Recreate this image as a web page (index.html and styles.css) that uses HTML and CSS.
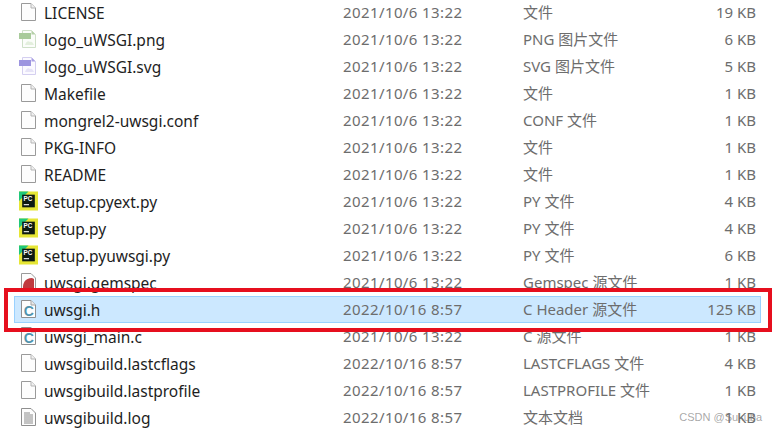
FILE: index.html
```html
<!DOCTYPE html>
<html lang="zh-CN">
<head>
  <meta charset="UTF-8" />
  <title>uwsgi</title>
  <link rel="stylesheet" href="styles.css">
</head>
<body>
  <svg class="defs" width="0" height="0">
    <symbol id="doc" viewBox="0 0 17 20">
      <path d="M1.5 1.5h9.5l4.5 4.5v12.5h-14z" fill="#fdfdfd" stroke="#9a9a9a"/>
      <path d="M11 1.5v4.5h4.5" fill="#f1f1f1" stroke="#b5b5b5"/>
    </symbol>
    <symbol id="png" viewBox="0 0 19 20">
      <path d="M3.5 1.5h9l4 4v13h-13z" fill="#fbfdfa" stroke="#cfe0c8"/>
      <path d="M12.5 1.5v4h4z" fill="#b5d0a8"/>
      <rect x="0" y="4" width="12" height="6" fill="#a9cb9b"/>
      <path d="M6 16c1-3 3-5 5-3 2-1 3 1 4 3z" fill="#e3efdd"/>
    </symbol>
    <symbol id="svgfile" viewBox="0 0 19 20">
      <path d="M3.5 1.5h9l4 4v13h-13z" fill="#fbfaff" stroke="#d4cff0"/>
      <path d="M12.5 1.5v4h4z" fill="#a9a0e4"/>
      <rect x="0" y="4" width="12" height="6" fill="#9d95e0"/>
      <path d="M6 16c1-3 3-5 5-3 2-1 3 1 4 3z" fill="#e6e3f7"/>
    </symbol>
    <symbol id="pc" viewBox="0 0 18 18">
      <rect width="18" height="18" fill="#e6e635"/>
      <path d="M0 0h9L0 9z" fill="#20c87a"/>
      <rect x="3" y="3" width="12" height="12" fill="#0d1a12"/>
      <text x="4.2" y="8.6" class="pc-text">PC</text>
      <rect x="4.5" y="12" width="5" height="1" fill="#fff"/>
    </symbol>
    <symbol id="gem" viewBox="0 0 17 20">
      <path d="M1.5 1.5h9.5l4.5 4.5v12.5h-14z" fill="#fdfdfd" stroke="#9a9a9a"/>
      <path d="M3 17c-.5-6 2-11 9-11l2 1v10z" fill="#bf3a3f"/>
    </symbol>
    <symbol id="cfile" viewBox="0 0 17 20">
      <path d="M1.5 1.5h9.5l4.5 4.5v12.5h-14z" fill="#fdfdfd" stroke="#8f8f8f"/>
      <path d="M11 1.5v4.5h4.5" fill="#e8e8e8" stroke="#a5a5a5"/>
      <text x="3.8" y="16.5" class="c-text">C</text>
    </symbol>
    <symbol id="txt" viewBox="0 0 17 20">
      <path d="M1.5 1.5h9.5l4.5 4.5v12.5h-14z" fill="#fdfdfd" stroke="#8f8f8f"/>
      <path d="M4 6h6M4 8h9M4 10h9M4 12h9M4 14h9M4 16h9" stroke="#8a8a8a"/>
    </symbol>
  </svg>

  <div class="list">
    <div class="row"><svg class="icon"><use href="#doc"/></svg><span class="name">LICENSE</span><span class="date">2021/10/6 13:22</span><span class="type">文件</span><span class="size">19 KB</span></div>
    <div class="row"><svg class="icon"><use href="#png"/></svg><span class="name">logo_uWSGI.png</span><span class="date">2021/10/6 13:22</span><span class="type">PNG 图片文件</span><span class="size">6 KB</span></div>
    <div class="row"><svg class="icon"><use href="#svgfile"/></svg><span class="name">logo_uWSGI.svg</span><span class="date">2021/10/6 13:22</span><span class="type">SVG 图片文件</span><span class="size">5 KB</span></div>
    <div class="row"><svg class="icon"><use href="#doc"/></svg><span class="name">Makefile</span><span class="date">2021/10/6 13:22</span><span class="type">文件</span><span class="size">1 KB</span></div>
    <div class="row"><svg class="icon"><use href="#doc"/></svg><span class="name">mongrel2-uwsgi.conf</span><span class="date">2021/10/6 13:22</span><span class="type">CONF 文件</span><span class="size">1 KB</span></div>
    <div class="row"><svg class="icon"><use href="#doc"/></svg><span class="name">PKG-INFO</span><span class="date">2021/10/6 13:22</span><span class="type">文件</span><span class="size">1 KB</span></div>
    <div class="row"><svg class="icon"><use href="#doc"/></svg><span class="name">README</span><span class="date">2021/10/6 13:22</span><span class="type">文件</span><span class="size">1 KB</span></div>
    <div class="row"><svg class="icon"><use href="#pc"/></svg><span class="name">setup.cpyext.py</span><span class="date">2021/10/6 13:22</span><span class="type">PY 文件</span><span class="size">4 KB</span></div>
    <div class="row"><svg class="icon"><use href="#pc"/></svg><span class="name">setup.py</span><span class="date">2021/10/6 13:22</span><span class="type">PY 文件</span><span class="size">4 KB</span></div>
    <div class="row"><svg class="icon"><use href="#pc"/></svg><span class="name">setup.pyuwsgi.py</span><span class="date">2021/10/6 13:22</span><span class="type">PY 文件</span><span class="size">6 KB</span></div>
    <div class="row"><svg class="icon"><use href="#gem"/></svg><span class="name">uwsgi.gemspec</span><span class="date">2021/10/6 13:22</span><span class="type">Gemspec 源文件</span><span class="size">1 KB</span></div>
    <div class="row selected"><svg class="icon"><use href="#cfile"/></svg><span class="name">uwsgi.h</span><span class="date">2022/10/16 8:57</span><span class="type">C Header 源文件</span><span class="size">125 KB</span></div>
    <div class="row"><svg class="icon"><use href="#cfile"/></svg><span class="name">uwsgi_main.c</span><span class="date">2021/10/6 13:22</span><span class="type">C 源文件</span><span class="size">1 KB</span></div>
    <div class="row"><svg class="icon"><use href="#doc"/></svg><span class="name">uwsgibuild.lastcflags</span><span class="date">2022/10/16 8:57</span><span class="type">LASTCFLAGS 文件</span><span class="size">4 KB</span></div>
    <div class="row"><svg class="icon"><use href="#doc"/></svg><span class="name">uwsgibuild.lastprofile</span><span class="date">2022/10/16 8:57</span><span class="type">LASTPROFILE 文件</span><span class="size">1 KB</span></div>
    <div class="row"><svg class="icon"><use href="#txt"/></svg><span class="name">uwsgibuild.log</span><span class="date">2022/10/16 8:57</span><span class="type">文本文档</span><span class="size">1 KB</span></div>
  </div>

  <div class="red-box"></div>
  <div class="watermark">CSDN @Sukuba</div>
</body>
</html>
```

FILE: styles.css
```css
html, body {
  margin: 0;
  height: 100%;
  overflow: hidden;
  background: #fff;
}
body {
  font-family: "Noto Sans", "Noto Sans CJK SC", sans-serif;
  font-size: 15px;
  position: relative;
}
.defs {
  display: none;
}
.pc-text {
  font-family: "Liberation Sans", sans-serif;
  font-size: 6px;
  font-weight: bold;
  fill: #fff;
}
.c-text {
  font-family: "Liberation Sans", sans-serif;
  font-size: 14px;
  font-weight: bold;
  fill: #4f93ad;
}
.list {
  margin-top: -1px;
  padding-left: 14px;
  width: 747px;
}
.row {
  display: flex;
  align-items: center;
  height: 27px;
  box-sizing: border-box;
  color: #6d6d6d;
  border: 1px solid transparent;
  border-left-width: 0;
  padding-left: 5px;
  padding-bottom: 2px;
}
.selected {
  background: #cce8ff;
  border: 1px solid #99d1ff;
  padding-left: 4px;
}
.icon {
  width: 19px;
  height: 20px;
  flex: none;
}
.name {
  margin-left: 6px;
  margin-top: 2px;
  width: 299px;
  font-size: 15.5px;
  color: #1e1e1e;
  white-space: nowrap;
}
.date {
  width: 180px;
  letter-spacing: 0.4px;
  white-space: nowrap;
}
.type {
  width: 140px;
  white-space: nowrap;
}
.size {
  width: 93px;
  text-align: right;
}
.red-box {
  position: absolute;
  left: 4px;
  top: 288px;
  width: 760px;
  height: 36px;
  border: 4px solid #e60f1e;
}
.watermark {
  position: absolute;
  right: 15px;
  top: 411px;
  font-family: "Liberation Sans", sans-serif;
  font-size: 11px;
  color: rgba(120, 120, 120, 0.65);
}
```
